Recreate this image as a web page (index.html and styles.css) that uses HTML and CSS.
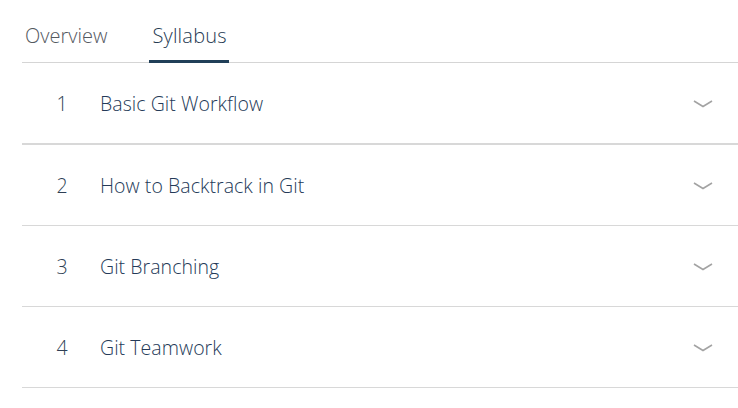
FILE: index.html
```html
<!DOCTYPE html>
<html lang="en">
<head>
<meta charset="utf-8">
<title>Syllabus</title>
<link rel="stylesheet" href="styles.css">
</head>
<body>
<div class="page">
  <nav class="tabs">
    <div class="tab">Overview</div>
    <div class="tab tab-active">Syllabus</div>
  </nav>
  <ul class="syllabus">
    <li class="row row-first">
      <span class="num">1</span>
      <span class="title">Basic Git Workflow</span>
      <svg class="chev" width="20" height="8" viewBox="0 0 20 8"><path d="M1 1 L10 6.5 L19 1" fill="none" stroke="#a3a3a3" stroke-width="1.6"/></svg>
    </li>
    <li class="row">
      <span class="num">2</span>
      <span class="title">How to Backtrack in Git</span>
      <svg class="chev" width="20" height="8" viewBox="0 0 20 8"><path d="M1 1 L10 6.5 L19 1" fill="none" stroke="#a3a3a3" stroke-width="1.6"/></svg>
    </li>
    <li class="row">
      <span class="num">3</span>
      <span class="title">Git Branching</span>
      <svg class="chev" width="20" height="8" viewBox="0 0 20 8"><path d="M1 1 L10 6.5 L19 1" fill="none" stroke="#a3a3a3" stroke-width="1.6"/></svg>
    </li>
    <li class="row">
      <span class="num">4</span>
      <span class="title">Git Teamwork</span>
      <svg class="chev" width="20" height="8" viewBox="0 0 20 8"><path d="M1 1 L10 6.5 L19 1" fill="none" stroke="#a3a3a3" stroke-width="1.6"/></svg>
    </li>
  </ul>
</div>
</body>
</html>
```
FILE: styles.css
```css
html, body {
  margin: 0;
  padding: 0;
  background: #ffffff;
}
body {
  font-family: "Open Sans", "Liberation Sans", sans-serif;
  font-weight: 300;
}
.page {
  padding-left: 22px;
}
.tabs {
  display: flex;
  align-items: flex-end;
  gap: 40px;
  padding-top: 24px;
  border-bottom: 1px solid #d5d5d5;
}
.tab {
  font-size: 20px;
  line-height: 24px;
  padding: 0 2px 12px 3px;
  border-bottom: 3px solid transparent;
  margin-bottom: -1px;
  color: #55595f;
}
.tab-active {
  color: #263a52;
  border-bottom-color: #203f58;
  letter-spacing: 0.2px;
}
.syllabus {
  list-style: none;
  margin: 0;
  padding: 0;
}
.row {
  display: flex;
  align-items: center;
  height: 80px;
  border-bottom: 1px solid #d8d8d8;
  color: #243a58;
  font-size: 19.5px;
  letter-spacing: 0.05px;
}
.row-first {
  border-bottom-width: 2px;
}
.num {
  width: 80px;
  text-align: center;
  color: #2f3f55;
}
.title {
  flex: 1;
  margin-left: -2px;
}
.chev {
  margin-right: 25px;
  margin-top: 2px;
}
```
